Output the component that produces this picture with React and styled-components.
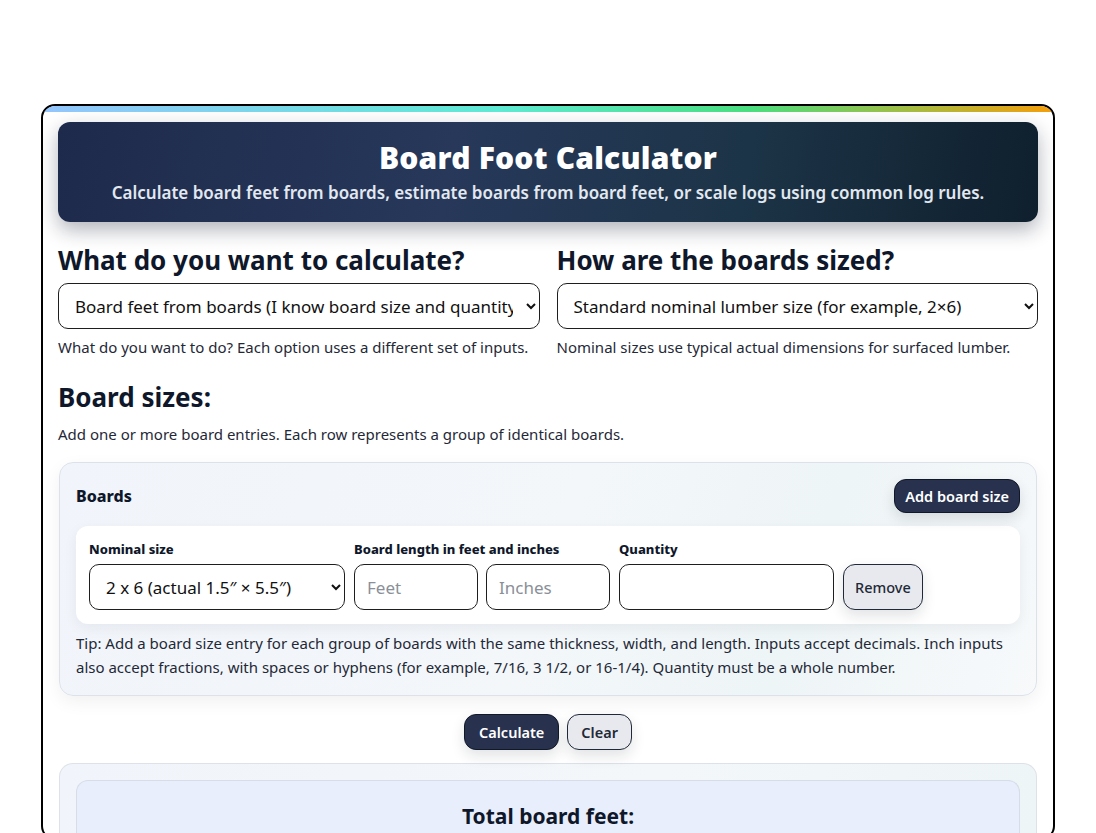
import React from 'react';
import styled, { createGlobalStyle } from 'styled-components';

const GlobalStyle = createGlobalStyle`
  html, body {
    margin: 0;
    padding: 0;
    background: #ffffff;
  }
  body {
    font-family: "Noto Sans", "Open Sans", sans-serif;
    color: #0f172a;
  }
  * {
    box-sizing: border-box;
  }
`;

const Page = styled.div`
  padding: 104px 0 40px;
  display: flex;
  justify-content: center;
`;

const Card = styled.div`
  position: relative;
  width: 1014px;
  border: 2px solid #000;
  border-radius: 14px;
  background: #fff;
  padding: 16px 15px 0;
  overflow: hidden;
  &::before {
    content: '';
    position: absolute;
    left: 0;
    right: 0;
    top: 0;
    height: 6px;
    background: linear-gradient(90deg, #93c5fd 0%, #5eead4 45%, #4ade80 70%, #f59e0b 100%);
  }
`;

const Header = styled.header`
  border-radius: 12px;
  padding: 18px 24px 17px;
  text-align: center;
  background: linear-gradient(100deg, #1e2a4c 0%, #27385a 40%, #1c3447 70%, #0f1f2d 100%);
  box-shadow: 0 8px 20px rgba(15, 23, 42, 0.32);
  color: #fff;
`;

const Title = styled.h1`
  margin: 0;
  font-size: 30px;
  font-weight: 900;
  line-height: 36px;
  letter-spacing: 0.2px;
`;

const Subtitle = styled.p`
  margin: 5px 0 0;
  font-size: 17px;
  font-weight: 600;
  line-height: 24px;
  color: #e2e8f0;
`;

const Columns = styled.div`
  display: grid;
  grid-template-columns: 1fr 1fr;
  gap: 17px;
  margin-top: 20px;
`;

const Field = styled.div`
  display: flex;
  flex-direction: column;
`;

const Heading = styled.h2`
  margin: 0 0 5px;
  font-size: 26px;
  font-weight: 700;
  line-height: 36px;
  color: #0f172a;
`;

const Select = styled.select`
  height: 46px;
  width: 100%;
  border: 1px solid #1e1e1e;
  border-radius: 10px;
  padding: 0 10px 0 12px;
  font-family: inherit;
  font-size: 17px;
  color: #111;
  background: #fff;
`;

const Help = styled.p`
  margin: 7px 0 0;
  font-size: 15px;
  line-height: 22px;
  color: #1f2937;
`;

const SectionTitle = styled.h2`
  margin: 21px 0 0;
  font-size: 26px;
  font-weight: 700;
  line-height: 36px;
`;

const SectionText = styled.p`
  margin: 8px 0 17px;
  font-size: 15px;
  line-height: 22px;
  color: #1f2937;
`;

const Panel = styled.section`
  margin: 0 1px;
  border: 1px solid #dde2ea;
  border-radius: 14px;
  padding: 16px 16px 16px;
  background: linear-gradient(110deg, #f1f5fb 0%, #f3f7fa 50%, #eef5f6 75%, #f7f9fb 100%);
  box-shadow: 0 6px 18px rgba(15, 23, 42, 0.06);
`;

const PanelHead = styled.div`
  display: flex;
  align-items: center;
  justify-content: space-between;
  margin-bottom: 13px;
`;

const PanelTitle = styled.h3`
  margin: 0;
  font-size: 16px;
  font-weight: 800;
`;

const PrimaryButton = styled.button`
  height: ${p => p.$tall ? '36px' : '34px'};
  padding: 0 ${p => p.$tall ? '14px' : '10px'};
  border: 1px solid #111827;
  border-radius: 12px;
  background: #28324f;
  color: #fff;
  font-family: inherit;
  font-size: 14.5px;
  font-weight: 600;
  box-shadow: 0 6px 14px rgba(15, 23, 42, 0.12);
`;

const SecondaryButton = styled.button`
  height: ${p => p.$tall ? '36px' : '46px'};
  padding: 0 ${p => p.$tall ? '13px' : '11px'};
  border: 1px solid #1f2937;
  border-radius: 12px;
  background: #e8e9ef;
  color: #1f2937;
  font-family: inherit;
  font-size: 14.5px;
  font-weight: ${p => p.$tall ? 600 : 500};
  box-shadow: 0 6px 14px rgba(15, 23, 42, 0.12);
`;

const Row = styled.div`
  display: flex;
  align-items: flex-end;
  gap: 9px;
  background: #fff;
  border-radius: 12px;
  padding: 14px 14px 14px 13px;
  box-shadow: 0 4px 14px rgba(15, 23, 42, 0.06);
`;

const RowField = styled.div`
  display: flex;
  flex-direction: column;
  width: ${p => p.$w};
`;

const Label = styled.label`
  font-size: 13px;
  font-weight: 800;
  line-height: 18px;
  margin-bottom: 6px;
  white-space: nowrap;
`;

const Pair = styled.div`
  display: flex;
  gap: 8px;
`;

const Input = styled.input`
  height: 46px;
  width: ${p => p.$w || '100%'};
  border: 1px solid #1e1e1e;
  border-radius: 10px;
  padding: 0 12px;
  font-family: inherit;
  font-size: 17px;
  color: #111;
  &::placeholder {
    color: #8a8f98;
  }
`;

const Tip = styled.p`
  margin: 7px 0 0;
  font-size: 15px;
  line-height: 24px;
  color: #1f2937;
`;

const Actions = styled.div`
  display: flex;
  justify-content: center;
  gap: 8px;
  margin: 18px 0 13px;
`;

const Results = styled.section`
  margin: 0 1px;
  border: 1px solid #dde2ea;
  border-bottom: none;
  border-radius: 14px 14px 0 0;
  padding: 16px 16px 0;
  background: linear-gradient(110deg, #f1f5fb 0%, #f3f7fa 60%, #eef5f6 100%);
`;

const ResultBox = styled.div`
  border: 1px solid #d6dce8;
  border-bottom: none;
  border-radius: 12px 12px 0 0;
  background: #e8eefc;
  padding: 21px 16px 8px;
  text-align: center;
`;

const ResultTitle = styled.h3`
  margin: 0;
  font-size: 21px;
  font-weight: 700;
  line-height: 28px;
`;

export default function App() {
  return (
    <>
      <GlobalStyle />
      <Page>
        <Card>
          <Header>
            <Title>Board Foot Calculator</Title>
            <Subtitle>
              Calculate board feet from boards, estimate boards from board feet, or scale logs using common log rules.
            </Subtitle>
          </Header>

          <Columns>
            <Field>
              <Heading>What do you want to calculate?</Heading>
              <Select defaultValue="boards">
                <option value="boards">Board feet from boards (I know board size and quantity)</option>
                <option value="count">Boards from board feet</option>
                <option value="logs">Log scale</option>
              </Select>
              <Help>What do you want to do? Each option uses a different set of inputs.</Help>
            </Field>
            <Field>
              <Heading>How are the boards sized?</Heading>
              <Select defaultValue="nominal">
                <option value="nominal">Standard nominal lumber size (for example, 2×6)</option>
                <option value="custom">Custom actual dimensions</option>
              </Select>
              <Help>Nominal sizes use typical actual dimensions for surfaced lumber.</Help>
            </Field>
          </Columns>

          <SectionTitle>Board sizes:</SectionTitle>
          <SectionText>Add one or more board entries. Each row represents a group of identical boards.</SectionText>

          <Panel>
            <PanelHead>
              <PanelTitle>Boards</PanelTitle>
              <PrimaryButton>Add board size</PrimaryButton>
            </PanelHead>
            <Row>
              <RowField $w="256px">
                <Label>Nominal size</Label>
                <Select defaultValue="2x6">
                  <option value="2x6">2 x 6 (actual 1.5″ × 5.5″)</option>
                  <option value="2x4">2 x 4 (actual 1.5″ × 3.5″)</option>
                </Select>
              </RowField>
              <RowField $w="256px">
                <Label>Board length in feet and inches</Label>
                <Pair>
                  <Input $w="124px" placeholder="Feet" />
                  <Input $w="124px" placeholder="Inches" />
                </Pair>
              </RowField>
              <RowField $w="215px">
                <Label>Quantity</Label>
                <Input />
              </RowField>
              <SecondaryButton>Remove</SecondaryButton>
            </Row>
            <Tip>
              Tip: Add a board size entry for each group of boards with the same thickness, width, and length. Inputs accept decimals. Inch inputs also accept fractions, with spaces or hyphens (for example, 7/16, 3 1/2, or 16-1/4). Quantity must be a whole number.
            </Tip>
          </Panel>

          <Actions>
            <PrimaryButton $tall>Calculate</PrimaryButton>
            <SecondaryButton $tall>Clear</SecondaryButton>
          </Actions>

          <Results>
            <ResultBox>
              <ResultTitle>Total board feet:</ResultTitle>
            </ResultBox>
          </Results>
        </Card>
      </Page>
    </>
  );
}
